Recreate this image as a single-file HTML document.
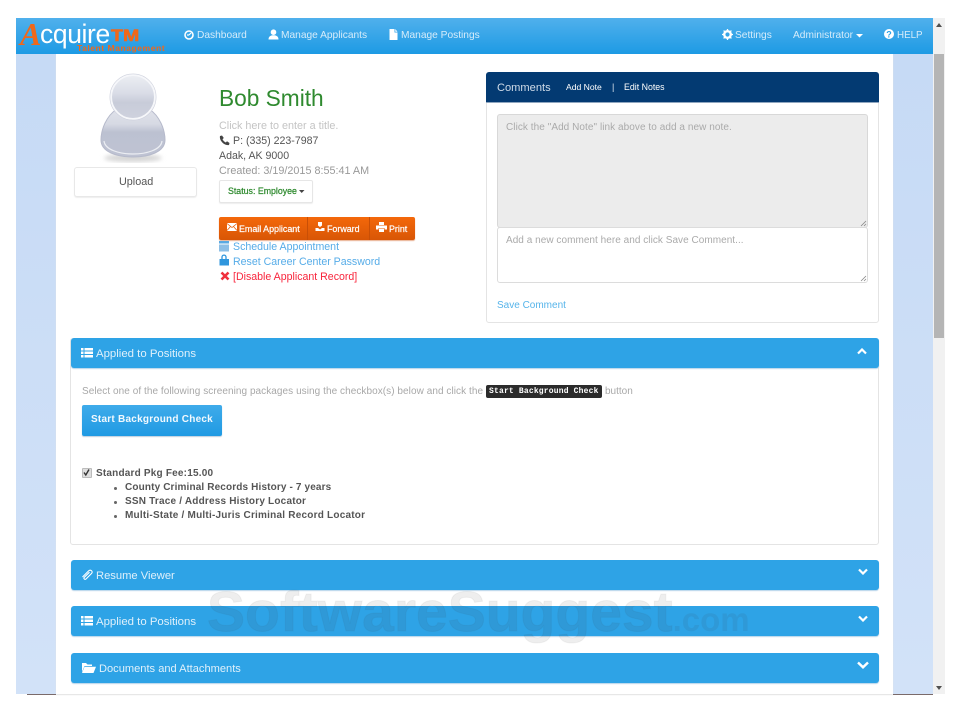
<!DOCTYPE html>
<html><head><meta charset="utf-8"><title>Acquire</title>
<style>
html,body{margin:0;padding:0;width:960px;height:712px;overflow:hidden;background:#fff}
body{font-family:"Liberation Sans",sans-serif;position:relative;filter:blur(.35px)}
.a{position:absolute;white-space:nowrap}
.t{position:absolute;white-space:nowrap;line-height:14px}
svg{position:absolute;display:block}
.nav{color:#d6ecfa;font-size:10.2px}
.bar{position:absolute;left:71px;width:808px;background:#2ea3e6;border-radius:3px;box-shadow:0 1px 1px #b5d3ea}
.g{color:#555;font-size:10.6px}
.btn{font-size:8.900px;color:#fff;-webkit-text-stroke:.2px #fff}
</style></head><body>
<div class="a" style="left:16px;top:54px;width:40px;height:640px;background:linear-gradient(#c6daf5,#d2e2f8)"></div>
<div class="a" style="left:893px;top:54px;width:40px;height:640px;background:linear-gradient(#c6daf5,#d2e2f8)"></div>
<div class="a" style="left:56px;top:54px;width:837px;height:640px;background:#fff;box-shadow:0 1px 1px #e2e2e2"></div>
<div class="a" style="left:27px;top:694px;width:29px;height:1px;background:#7a6a6a"></div>
<div class="a" style="left:893px;top:694px;width:40px;height:1px;background:#7a6a6a"></div>

<!-- scrollbar -->
<div class="a" style="left:933px;top:18px;width:12px;height:676px;background:#f1f1f1"></div>
<div class="a" style="left:934px;top:54px;width:10px;height:284px;background:#b5b5b5"></div>
<svg style="left:935px;top:22px" width="8" height="6"><path d="M4 1L7 5H1Z" fill="#505050"/></svg>
<svg style="left:935px;top:685px" width="8" height="6"><path d="M1 1H7L4 5Z" fill="#505050"/></svg>

<!-- navbar -->
<div class="a" style="left:16px;top:18px;width:917px;height:36px;background:linear-gradient(#50b0ec,#1d9ae4)"></div>
<div class="t" style="left:20px;top:17px;font:italic 700 32px/34px 'Liberation Serif',serif;color:#f0681a">A</div>
<div class="t" style="left:40px;top:19px;font-size:26.500px;line-height:30px;color:#fff;letter-spacing:-.4px">cquire</div>
<div class="t" style="left:111px;top:27px;font-size:17px;line-height:18px;font-weight:900;color:#f0681a;-webkit-text-stroke:.6px #f0681a;transform:scaleX(1.15);transform-origin:left">TM</div>
<div class="t" style="left:77px;top:42px;font-size:8.600px;line-height:12px;font-weight:700;color:#f0681a;letter-spacing:.5px">Talent Management</div>

<svg style="left:184px;top:30px" width="10" height="10" viewBox="0 0 10 10"><circle cx="5" cy="5" r="4" fill="none" stroke="#fff" stroke-width="1.6"/><path d="M5 5L7 3M3 5H5" stroke="#fff" stroke-width="1.2"/></svg>
<div class="t nav" style="left:197px;top:29px">Dashboard</div>
<svg style="left:268px;top:29px" width="11" height="11" viewBox="0 0 11 11"><circle cx="5.5" cy="3.2" r="2.8" fill="#fff"/><path d="M0.5 10.5C.5 7 3 6.2 5.5 6.2S10.500 7 10.500 10.500Z" fill="#fff"/></svg>
<div class="t nav" style="left:281px;top:29px">Manage Applicants</div>
<svg style="left:389px;top:29px" width="9" height="11" viewBox="0 0 9 11"><path d="M.5 0H5.500V3.500H8.500V11H.5ZM6.300 0L8.500 2.700H6.300Z" fill="#fff"/></svg>
<div class="t nav" style="left:401px;top:29px">Manage Postings</div>

<svg style="left:722px;top:29px" width="11" height="11" viewBox="0 0 11 11"><circle cx="5.500" cy="5.500" r="3.300" fill="none" stroke="#fff" stroke-width="2.400"/><path d="M5.500 0V11M0 5.500H11M1.600 1.600L9.400 9.400M9.400 1.600L1.600 9.400" stroke="#fff" stroke-width="1.300" stroke-dasharray="2 7 2 0"/></svg>
<div class="t nav" style="left:735px;top:29px">Settings</div>
<div class="t nav" style="left:793px;top:29px">Administrator</div>
<svg style="left:856px;top:34px" width="7" height="4"><path d="M0 0H7L3.500 3.500Z" fill="#fff"/></svg>
<svg style="left:884px;top:29px" width="10" height="10" viewBox="0 0 10 10"><circle cx="5" cy="5" r="5" fill="#fff"/><text x="5" y="8.300" font-size="9" font-weight="700" text-anchor="middle" fill="#2ea3e6" font-family="Liberation Sans">?</text></svg>
<div class="t nav" style="left:897px;top:29px;font-size:9.800px">HELP</div>

<!-- avatar -->
<svg style="left:96px;top:72px" width="74" height="92" viewBox="0 0 74 92">
<defs>
<linearGradient id="h" x1="0" y1="0" x2="0" y2="1"><stop offset="0" stop-color="#eceef3"/><stop offset=".42" stop-color="#d9dce6"/><stop offset=".62" stop-color="#c8ccd9"/><stop offset="1" stop-color="#cfd2de"/></linearGradient>
<linearGradient id="b" x1="0" y1="0" x2="0" y2="1"><stop offset="0" stop-color="#e0e2ea"/><stop offset=".32" stop-color="#d6d9e3"/><stop offset=".48" stop-color="#bcc1d1"/><stop offset="1" stop-color="#bfc3d3"/></linearGradient>
<filter id="s"><feGaussianBlur stdDeviation="2"/></filter>
</defs>
<ellipse cx="37" cy="86" rx="29" ry="4" fill="#d6d6d6" filter="url(#s)"/>
<path d="M21 37C10 44 5 58 5 68C5 80 21 85 37 85S69 80 69 68C69 58 64 44 53 37Z" fill="url(#b)" stroke="#b6bacb" stroke-width="1"/>
<path d="M8 69C9 78 24 82 37 82S65 78 66 69" fill="none" stroke="#eceef3" stroke-width="1.200"/>
<circle cx="37" cy="25" r="22" fill="url(#h)" stroke="#f6f7fa" stroke-width="2"/>
<circle cx="37" cy="25" r="23.100" fill="none" stroke="#cdd0dc" stroke-width=".6"/>
</svg>
<div class="a" style="left:74px;top:167px;height:28px;background:#fff;border:1px solid #e8e8e8;border-radius:3px;box-shadow:0 1px 1px #eee;width:121px"></div>
<div class="t" style="left:119px;top:175px;font-size:10.800px;color:#555">Upload</div>

<!-- person -->
<div class="t" style="left:219px;top:84px;font-size:22.700px;line-height:28px;color:#2f8a2f">Bob Smith</div>
<div class="t" style="left:219px;top:119px;font-size:10.800px;color:#c4c4c4">Click here to enter a title.</div>
<svg style="left:219px;top:135px" width="11" height="11" viewBox="0 0 11 11"><path d="M1 1L3 .5L4.800 3L3.500 4.300C4 5.500 5.500 7 6.800 7.500L8 6.200L10.500 8L10 10C5.500 11 0 5.500 1 1Z" fill="#444"/></svg>
<div class="t g" style="left:233px;top:134px">P: (335) 223-7987</div>
<div class="t g" style="left:219px;top:149px">Adak, AK 9000</div>
<div class="t" style="left:219px;top:164px;font-size:10.800px;color:#999">Created: 3/19/2015 8:55:41 AM</div>
<div class="a" style="left:219px;top:180px;width:92px;height:21px;background:#fff;border:1px solid #e6e6e6;border-radius:2px;box-shadow:0 1px 1px #eee"></div>
<div class="t" style="left:228px;top:184px;font-size:8.800px;color:#2f8a2f;-webkit-text-stroke:.25px #2f8a2f">Status: Employee</div>
<svg style="left:299px;top:190px" width="6" height="4"><path d="M0 0H5.500L2.700 3Z" fill="#444"/></svg>

<!-- orange -->
<div class="a" style="left:219px;top:217px;width:196px;height:23px;background:linear-gradient(#f4680a,#d85606);border-radius:2px;box-shadow:0 1px 1px #e8b090"></div>
<div class="a" style="left:307px;top:217px;width:1px;height:23px;background:#c94f06"></div>
<div class="a" style="left:369px;top:217px;width:1px;height:23px;background:#c94f06"></div>
<svg style="left:227px;top:223px" width="10" height="8" viewBox="0 0 10 8"><path d="M0 0H10V8H0Z" fill="#fff"/><path d="M0 .5L5 4.500L10 .5M0 7.500L3.500 3.500M10 7.500L6.500 3.500" stroke="#e9630c" stroke-width=".8" fill="none"/></svg>
<div class="t btn" style="left:239px;top:222px">Email Applicant</div>
<svg style="left:315px;top:222px" width="10" height="10" viewBox="0 0 10 10"><path d="M3 0H7V3.500L5 5L3 3.500ZM.5 6H3L5 7.500L7 6H9.500V9H.5Z" fill="#fff"/></svg>
<div class="t btn" style="left:327px;top:222px">Forward</div>
<svg style="left:376px;top:222px" width="11" height="10" viewBox="0 0 11 10"><path d="M3 0H8V3H3ZM0 3.500H11V7.500H8.500V6H2.500V7.500H0ZM3 6.500H8V10H3Z" fill="#fff"/></svg>
<div class="t btn" style="left:389px;top:222px">Print</div>

<svg style="left:219px;top:240px" width="11" height="12" viewBox="0 0 11 12"><path d="M0 1H10V3.500H0Z" fill="#5aa9e2"/><path d="M0 4.500H10V11.500H0Z" fill="#8dbfe6"/></svg>
<div class="t" style="left:233px;top:240px;font-size:10.600px;color:#56ace8">Schedule Appointment</div>
<svg style="left:219px;top:254px" width="11" height="12" viewBox="0 0 11 12"><path d="M3 5V3C3 .5 7 .5 7 3V5" fill="none" stroke="#2f96dd" stroke-width="1.300"/><path d="M.5 5H10V11.500H.5Z" fill="#2f96dd"/></svg>
<div class="t" style="left:233px;top:255px;font-size:10.600px;color:#56ace8">Reset Career Center Password</div>
<svg style="left:220px;top:271px" width="10" height="10" viewBox="0 0 10 10"><path d="M1.500 1.500L8.500 8.500M8.500 1.500L1.500 8.500" stroke="#f0303c" stroke-width="2.600"/></svg>
<div class="t" style="left:233px;top:270px;font-size:10.600px;color:#f8253c">[Disable Applicant Record]</div>

<!-- comments -->
<div class="a" style="left:486px;top:72px;width:391px;height:249px;background:#fff;border:1px solid #e4e4e4;border-radius:3px"></div>
<div class="a" style="left:486px;top:72px;width:393px;height:30px;background:#033a72;border-radius:3px 3px 0 0;box-shadow:0 1px 0 #8fa6bf"></div>
<div class="t" style="left:497px;top:81px;font-size:11.100px;color:#cfdbe8">Comments</div>
<div class="t" style="left:566px;top:80px;font-size:8.600px;color:#fff">Add Note</div>
<div class="t" style="left:612px;top:80px;font-size:9px;color:#dfe7ef">|</div>
<div class="t" style="left:624px;top:80px;font-size:8.800px;color:#fff">Edit Notes</div>
<div class="a" style="left:497px;top:114px;width:369px;height:112px;background:#ececec;border:1px solid #d8d8d8;border-radius:3px"></div>
<div class="t" style="left:506px;top:121px;font-size:10px;letter-spacing:.06px;color:#aaa">Click the "Add Note" link above to add a new note.</div>
<div class="a" style="left:497px;top:227px;width:369px;height:54px;background:#fff;border:1px solid #dcdcdc;border-radius:3px"></div>
<div class="t" style="left:506px;top:234px;font-size:10px;letter-spacing:.04px;color:#aaa">Add a new comment here and click Save Comment...</div>
<svg style="left:860px;top:220px" width="7" height="7"><path d="M1 6L6 1M4 6L6 4" stroke="#888" stroke-width=".8"/></svg>
<svg style="left:860px;top:275px" width="7" height="7"><path d="M1 6L6 1M4 6L6 4" stroke="#888" stroke-width=".8"/></svg>
<div class="t" style="left:497px;top:299px;font-size:10px;color:#56b4ea">Save Comment</div>

<!-- applied panel -->
<div class="a" style="left:70px;top:338px;width:807px;height:205px;background:#fff;border:1px solid #e4e4e4;border-radius:3px"></div>
<div class="bar" style="top:338px;height:30px"></div>
<svg style="left:81px;top:348px" width="12" height="10" viewBox="0 0 12 10"><path d="M0 0H2.500V2.500H0ZM3.500 0H12V2.500H3.500ZM0 3.500H2.500V6H0ZM3.500 3.500H12V6H3.500ZM0 7H2.500V9.500H0ZM3.500 7H12V9.500H3.500Z" fill="#fff"/></svg>
<div class="t" style="left:96px;top:347px;font-size:11.400px;color:#dff0fb">Applied to Positions</div>
<svg style="left:857px;top:348px" width="10" height="7" viewBox="0 0 10 7"><path d="M1 5.500L5 1.500L9 5.500" fill="none" stroke="#fff" stroke-width="2.200"/></svg>

<div class="t" style="left:82px;top:385px;font-size:10px;letter-spacing:.06px;color:#a8a8a8">Select one of the following screening packages using the checkbox(s) below and click the</div>
<div class="a" style="left:486px;top:385px;width:116px;height:13px;background:#2b2b2b;border-radius:2px"></div>
<div class="t" style="left:489px;top:385px;font:700 8px/13px 'Liberation Mono',monospace;letter-spacing:.18px;color:#fff">Start Background Check</div>
<div class="t" style="left:605px;top:385px;font-size:10px;color:#a8a8a8">button</div>
<div class="a" style="left:82px;top:405px;width:140px;height:31px;background:linear-gradient(#3fabea,#1f9ae3);border-radius:2px;box-shadow:0 1px 1px #bcd"></div>
<div class="t" style="left:91px;top:413px;font-size:10px;font-weight:700;letter-spacing:.24px;color:#f2f9fe">Start Background Check</div>
<div class="a" style="left:82px;top:468px;width:8px;height:8px;background:#dedede;border:.5px solid #bbb;border-radius:1px"></div>
<svg style="left:82px;top:468px" width="9" height="9"><path d="M2 4.500L3.800 7L7 1.500" fill="none" stroke="#333" stroke-width="1.400"/></svg>
<div class="t" style="left:96px;top:467px;font-size:10px;font-weight:700;letter-spacing:.2px;color:#555">Standard Pkg Fee:15.00</div>
<div class="a" style="left:114px;top:487px;width:3px;height:3px;border-radius:2px;background:#666"></div>
<div class="t" style="left:125px;top:481px;font-size:10px;font-weight:700;letter-spacing:.14px;color:#555">County Criminal Records History - 7 years</div>
<div class="a" style="left:114px;top:501px;width:3px;height:3px;border-radius:2px;background:#666"></div>
<div class="t" style="left:125px;top:495px;font-size:10px;font-weight:700;letter-spacing:.2px;color:#555">SSN Trace / Address History Locator</div>
<div class="a" style="left:114px;top:515px;width:3px;height:3px;border-radius:2px;background:#666"></div>
<div class="t" style="left:125px;top:509px;font-size:10px;font-weight:700;letter-spacing:.22px;color:#555">Multi-State / Multi-Juris Criminal Record Locator</div>

<!-- bars -->
<div class="bar" style="top:560px;height:30px"></div>
<svg style="left:81px;top:569px" width="13" height="11" viewBox="0 0 13 11"><path d="M1.500 8L7.500 2C9.500 0 12.500 2.500 10.500 4.500L5 10C3.800 11 2.200 9.500 3.300 8.300L8.500 3.200" fill="none" stroke="#fff" stroke-width="1.100"/></svg>
<div class="t" style="left:96px;top:569px;font-size:11.200px;color:#dff0fb">Resume Viewer</div>
<svg style="left:858px;top:568px" width="10" height="7" viewBox="0 0 10 7"><path d="M1 1.500L5 5.500L9 1.500" fill="none" stroke="#fff" stroke-width="2.200"/></svg>

<div class="bar" style="top:606px;height:30px"></div>
<svg style="left:81px;top:616px" width="12" height="10" viewBox="0 0 12 10"><path d="M0 0H2.500V2.500H0ZM3.500 0H12V2.500H3.500ZM0 3.500H2.500V6H0ZM3.500 3.500H12V6H3.500ZM0 7H2.500V9.500H0ZM3.500 7H12V9.500H3.500Z" fill="#fff"/></svg>
<div class="t" style="left:96px;top:615px;font-size:11.400px;color:#dff0fb">Applied to Positions</div>
<svg style="left:858px;top:615px" width="10" height="7" viewBox="0 0 10 7"><path d="M1 1.500L5 5.500L9 1.500" fill="none" stroke="#fff" stroke-width="2.200"/></svg>

<div class="bar" style="top:653px;height:30px"></div>
<svg style="left:81px;top:662px" width="15" height="11" viewBox="0 0 15 11"><path d="M1 10V1H5L6.500 2.500H11V4H3.500Z" fill="#fff"/><path d="M3.500 4.800H15L12.500 11H1Z" fill="#fff"/></svg>
<div class="t" style="left:99px;top:662px;font-size:11.100px;color:#dff0fb">Documents and Attachments</div>
<svg style="left:857px;top:661px" width="12" height="8" viewBox="0 0 12 8"><path d="M1 1.500L6 6.300L11 1.500" fill="none" stroke="#fff" stroke-width="2.400"/></svg>

<!-- watermark -->
<div class="t" style="left:207px;top:582px;font-size:57px;line-height:60px;font-weight:700;color:rgba(60,60,60,.085);-webkit-text-stroke:1px rgba(60,60,60,.06)">SoftwareSuggest<span style="font-size:33px;-webkit-text-stroke:0">.com</span></div>
</body></html>
